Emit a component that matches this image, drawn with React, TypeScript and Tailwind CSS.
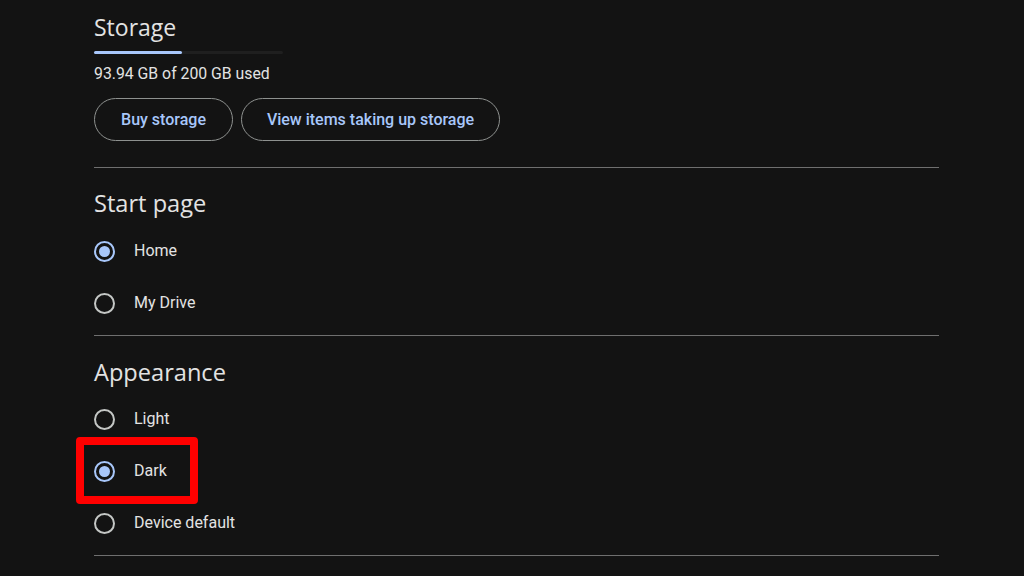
import React from "react";

function Radio({ label, checked }: { label: string; checked?: boolean }) {
  return (
    <div className="flex h-[52px] items-center">
      <div
        className={
          checked
            ? "flex h-[21px] w-[21px] items-center justify-center rounded-full border-2 border-[#a8c7fa]"
            : "h-[21px] w-[21px] rounded-full border-2 border-[#c4c7c5]"
        }
      >
        {checked && <div className="h-[11px] w-[11px] rounded-full bg-[#a8c7fa]" />}
      </div>
      <span className="ml-[19px] text-[16px] leading-[20px] text-[#e3e3e3]">{label}</span>
    </div>
  );
}

export default function App() {
  return (
    <div
      className="min-h-[576px] w-[1024px] overflow-hidden bg-[#131313] pl-[94px]"
      style={{ fontFamily: '"Roboto", "Open Sans", Arial, sans-serif' }}
    >
      <div className="w-[845px]">
        <div className="pt-[11px]">
          <h2 className="h-[32px] text-[23px] leading-[32px] text-[#e3e3e3]" style={{ fontFamily: '"Open Sans", Arial, sans-serif' }}>
            Storage
          </h2>
          <div className="mt-[8px] h-[3px] w-[189px] rounded-full bg-[#1f1f1f]">
            <div className="h-[3px] w-[88px] rounded-full bg-[#a8c7fa]" />
          </div>
          <p className="mt-[10px] text-[15.8px] leading-[20px] text-[#e3e3e3]">93.94 GB of 200 GB used</p>
          <div className="mt-[14px] flex gap-[8px]">
            <button className="h-[43px] w-[139px] rounded-full border border-[#8e918f] text-[16px] font-medium text-[#a8c7fa]">
              Buy storage
            </button>
            <button className="h-[43px] w-[259px] rounded-full border border-[#8e918f] text-[16px] font-medium text-[#a8c7fa]">
              View items taking up storage
            </button>
          </div>
        </div>

        <div className="mt-[26px] h-px bg-[#6f6f6f]" />

        <h2 className="mt-[19px] h-[32px] text-[23.6px] leading-[32px] text-[#e3e3e3]" style={{ fontFamily: '"Open Sans", Arial, sans-serif' }}>
          Start page
        </h2>
        <div className="mt-[6px]">
          <Radio label="Home" checked />
          <Radio label="My Drive" />
        </div>

        <div className="mt-[6px] h-px bg-[#6f6f6f]" />

        <h2 className="mt-[20px] h-[32px] text-[23.6px] leading-[32px] text-[#e3e3e3]" style={{ fontFamily: '"Open Sans", Arial, sans-serif' }}>
          Appearance
        </h2>
        <div className="mt-[5px]">
          <Radio label="Light" />
          <div className="relative">
            <Radio label="Dark" checked />
            <div className="pointer-events-none absolute left-[-18px] top-[-8px] h-[67px] w-[122px] rounded-[4px] border-[8px] border-[#ff0000]" />
          </div>
          <Radio label="Device default" />
        </div>

        <div className="mt-[6px] h-px bg-[#6f6f6f]" />
      </div>
    </div>
  );
}
